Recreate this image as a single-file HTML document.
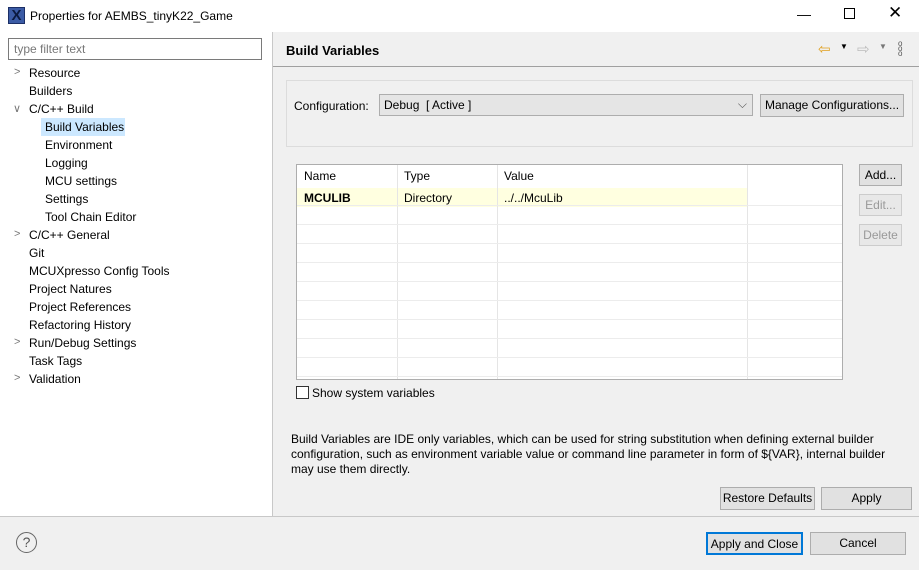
<!DOCTYPE html><html><head><style>
*{box-sizing:border-box}body{margin:0;width:919px;height:570px;position:relative;font-family:"Liberation Sans",sans-serif;font-size:12px;color:#000;background:#fff;overflow:hidden}
.a{position:absolute}
.btn{position:absolute;background:#e1e1e1;border:1px solid #adadad;text-align:center;line-height:20px;font-size:12px}
.tree div{position:absolute;white-space:nowrap}
.chev{color:#777;font-size:11px}
</style></head><body>
<!-- title bar -->
<div class="a" style="left:8px;top:7px;width:17px;height:17px;background:#3b5ba5;border:1px solid #1c2f66;color:#0b1a40;font-weight:bold;font-size:15px;line-height:15px;text-align:center">X</div>
<div class="a" style="left:30px;top:9px;font-size:12px">Properties for AEMBS_tinyK22_Game</div>
<div class="a" style="left:797px;top:6px;font-size:14px">—</div>
<div class="a" style="left:844px;top:8px;width:11px;height:11px;border:1px solid #000"></div>
<div class="a" style="left:888px;top:3px;font-size:17px">✕</div>
<!-- left panel -->
<div class="a" style="left:8px;top:38px;width:254px;height:22px;border:1px solid #7a7a7a;color:#777;padding:3px 5px">type filter text</div>
<div class="a" style="left:272px;top:32px;width:1px;height:484px;background:#c8c8c8"></div>
<div class="tree">
<div class="chev" style="left:14px;top:66px">&gt;</div><div style="left:29px;top:66px">Resource</div>
<div style="left:29px;top:84px">Builders</div>
<div class="chev" style="left:13px;top:102px">∨</div><div style="left:29px;top:102px">C/C++ Build</div>
<div class="a" style="left:41px;top:118px;width:84px;height:18px;background:#cce8ff"></div>
<div style="left:45px;top:120px">Build Variables</div>
<div style="left:45px;top:138px">Environment</div>
<div style="left:45px;top:156px">Logging</div>
<div style="left:45px;top:174px">MCU settings</div>
<div style="left:45px;top:192px">Settings</div>
<div style="left:45px;top:210px">Tool Chain Editor</div>
<div class="chev" style="left:14px;top:228px">&gt;</div><div style="left:29px;top:228px">C/C++ General</div>
<div style="left:29px;top:246px">Git</div>
<div style="left:29px;top:264px">MCUXpresso Config Tools</div>
<div style="left:29px;top:282px">Project Natures</div>
<div style="left:29px;top:300px">Project References</div>
<div style="left:29px;top:318px">Refactoring History</div>
<div class="chev" style="left:14px;top:336px">&gt;</div><div style="left:29px;top:336px">Run/Debug Settings</div>
<div style="left:29px;top:354px">Task Tags</div>
<div class="chev" style="left:14px;top:372px">&gt;</div><div style="left:29px;top:372px">Validation</div>
</div>
<!-- right panel -->
<div class="a" style="left:273px;top:32px;width:646px;height:484px;background:#f0f0f0"></div>
<div class="a" style="left:286px;top:43px;font-weight:bold;font-size:13px">Build Variables</div>
<div class="a" style="left:273px;top:66px;width:646px;height:1px;background:#a0a0a0"></div>
<div class="a" style="left:818px;top:40px;color:#e0a020;font-size:15px">⇦</div>
<div class="a" style="left:840px;top:42px;font-size:8px">▼</div>
<div class="a" style="left:857px;top:40px;color:#bbb;font-size:15px">⇨</div>
<div class="a" style="left:879px;top:42px;font-size:8px;color:#777">▼</div>
<div class="a" style="left:898px;top:41px;font-size:8px;line-height:5px;color:#555">o<br>o<br>o</div>
<div class="a" style="left:286px;top:80px;width:627px;height:67px;border:1px solid #dcdcdc"></div>
<div class="a" style="left:294px;top:99px">Configuration:</div>
<div class="a" style="left:379px;top:94px;width:374px;height:22px;background:#e5e5e5;border:1px solid #adadad;padding:3px 4px">Debug &nbsp;[ Active ]<span style="position:absolute;right:5px;top:2px;color:#555">⌵</span></div>
<div class="btn" style="left:760px;top:94px;width:144px;height:23px">Manage Configurations...</div>
<!-- table -->
<div class="a" style="left:296px;top:164px;width:547px;height:216px;background:#fff;border:1px solid #adadad"></div>
<div class="a" style="left:297px;top:188px;width:450px;height:19px;background:#ffffe0"></div>
<div class="a" style="left:397px;top:165px;width:1px;height:214px;background:#e5e5e5"></div>
<div class="a" style="left:497px;top:165px;width:1px;height:214px;background:#e5e5e5"></div>
<div class="a" style="left:747px;top:165px;width:1px;height:214px;background:#e5e5e5"></div>
<div class="a" style="left:297px;top:187px;width:545px;height:192px;background:repeating-linear-gradient(#0000 0 18px,#ececec 18px 19px)"></div>
<div class="a" style="left:304px;top:169px">Name</div><div class="a" style="left:404px;top:169px">Type</div><div class="a" style="left:504px;top:169px">Value</div>
<div class="a" style="left:304px;top:191px;font-weight:bold">MCULIB</div><div class="a" style="left:404px;top:191px">Directory</div><div class="a" style="left:504px;top:191px">../../McuLib</div>
<div class="btn" style="left:859px;top:164px;width:43px;height:22px">Add...</div>
<div class="btn" style="left:859px;top:194px;width:43px;height:22px;color:#999;border-color:#ccc;background:#e8e8e8">Edit...</div>
<div class="btn" style="left:859px;top:224px;width:43px;height:22px;color:#999;border-color:#ccc;background:#e8e8e8">Delete</div>
<div class="a" style="left:296px;top:386px;width:13px;height:13px;border:1px solid #333;background:#fff"></div>
<div class="a" style="left:312px;top:386px">Show system variables</div>
<div class="a" style="left:291px;top:432px;width:610px;line-height:15px">Build Variables are IDE only variables, which can be used for string substitution when defining external builder configuration, such as environment variable value or command line parameter in form of ${VAR}, internal builder may use them directly.</div>
<div class="btn" style="left:720px;top:487px;width:95px;height:23px">Restore Defaults</div>
<div class="btn" style="left:821px;top:487px;width:91px;height:23px">Apply</div>
<!-- bottom -->
<div class="a" style="left:0;top:516px;width:919px;height:1px;background:#c8c8c8"></div>
<div class="a" style="left:0;top:517px;width:919px;height:53px;background:#f0f0f0"></div>
<div class="a" style="left:16px;top:532px;width:21px;height:21px;border:1.5px solid #666;border-radius:50%;text-align:center;line-height:18px;font-size:14px;color:#555">?</div>
<div class="btn" style="left:706px;top:532px;width:97px;height:23px;border:2px solid #0078d7">Apply and Close</div>
<div class="btn" style="left:810px;top:532px;width:96px;height:23px">Cancel</div>
</body></html>
